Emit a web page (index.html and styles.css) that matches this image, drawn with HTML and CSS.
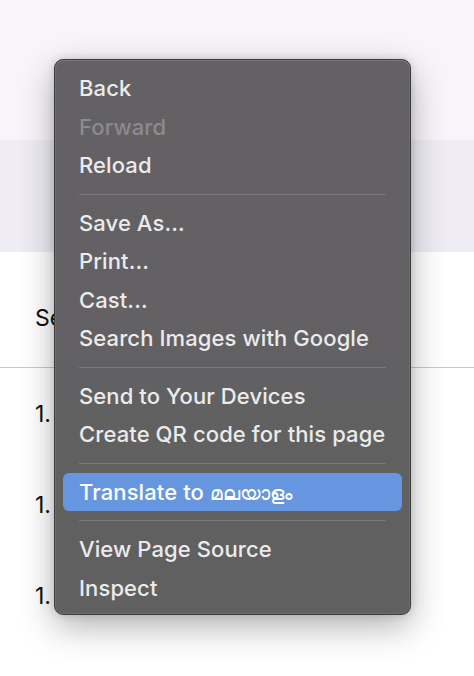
FILE: index.html
```html
<!DOCTYPE html>
<html lang="en">
<head>
    <meta charset="UTF-8">
    <meta name="viewport" content="width=device-width, initial-scale=1.0">
    <title>Context Menu</title>
    <link rel="stylesheet" href="styles.css">
</head>
<body>

<div class="page">
    <div class="top"></div>
    <div class="band"></div>
    <div class="heading">Se</div>
    <ol class="results">
        <li>1.</li>
        <li>1.</li>
        <li>1.</li>
    </ol>
</div>

<div class="menu">
    <div class="item">Back</div>
    <div class="item disabled">Forward</div>
    <div class="item">Reload</div>
    <div class="sep"></div>
    <div class="item">Save As...</div>
    <div class="item">Print...</div>
    <div class="item">Cast...</div>
    <div class="item">Search Images with Google</div>
    <div class="sep"></div>
    <div class="item">Send to Your Devices</div>
    <div class="item">Create QR code for this page</div>
    <div class="sep"></div>
    <div class="item active">Translate to <span class="ml">മലയാളം</span></div>
    <div class="sep"></div>
    <div class="item">View Page Source</div>
    <div class="item">Inspect</div>
</div>

</body>
</html>
```

FILE: styles.css
```css
body {
    margin: 0;
    font-family: Inter, "Noto Sans", sans-serif;
    background-color: #ffffff;
    position: relative;
    height: 676px;
    overflow: hidden;
}

.top {
    height: 140px;
    background-color: #f7f5f9;
}

.band {
    height: 111px;
    background-color: #efecf5;
    border-bottom: 1px solid #f6eef2;
}

.heading {
    height: 116px;
    box-sizing: border-box;
    padding: 0 35px;
    display: flex;
    align-items: center;
    padding-top: 16px;
    font-size: 23px;
    color: #111111;
    border-bottom: 1px solid #c8c8c8;
}

.results {
    list-style: none;
    margin: 0;
    padding: 0;
}

.results li {
    height: 91px;
    padding: 0 35px;
    display: flex;
    align-items: center;
    font-size: 23px;
    color: #111111;
}

.menu {
    position: absolute;
    left: 54px;
    top: 59px;
    width: 357px;
    box-sizing: border-box;
    padding: 9px 8px 7px 8px;
    background: linear-gradient(#646165, #606060);
    border: 1px solid #3c3c3c;
    border-radius: 9px;
    box-shadow: inset 0 1px 0 #7c7a7d, inset 0 0 0 1px #6e6c6e, 0 12px 34px rgba(0, 0, 0, 0.3), 0 0 8px rgba(0, 0, 0, 0.15);
}

.item {
    height: 38.5px;
    display: flex;
    align-items: center;
    padding: 0 16px;
    font-size: 22px;
    font-weight: 500;
    letter-spacing: 0.1px;
    color: #ebebeb;
    border-radius: 6px;
}

.disabled {
    color: #8c8a8c;
}

.active {
    background-color: #6696e0;
    color: #ffffff;
}

.ml {
    margin-left: 6px;
    margin-top: 3px;
    font-size: 20px;
}

.sep {
    height: 1px;
    margin: 9px 16px;
    background-color: #7a787a;
}
```
